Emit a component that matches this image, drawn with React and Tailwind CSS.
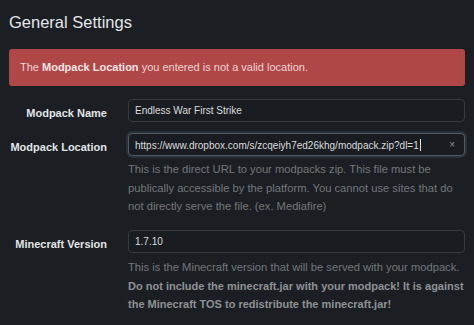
import clsx from 'clsx';

const FONT = "font-['Liberation_Sans',Arial,sans-serif]";

export default function App() {
	return (
		<div className={clsx('min-h-screen bg-[#1b1e22] px-[9px] pt-[10px]', FONT)}>
			<h2 className="text-[16.5px] leading-[24px] text-[#e4e7ea]">General Settings</h2>

			<div className="mt-[15px] rounded-[3px] bg-[#b04747] px-[11px] py-[11px] text-[11px] leading-[15px] text-[#efd3d3]">
				The <b className="text-[#f6e4e4]">Modpack Location</b> you entered is not a valid location.
			</div>

			<div className="mt-[13px]">
				<Row label="Modpack Name">
					<Field value="Endless War First Strike" />
				</Row>

				<Row label="Modpack Location" className="mt-[11px]">
					<Field value="https://www.dropbox.com/s/zcqeiyh7ed26khg/modpack.zip?dl=1" focused />
				</Row>
				<Help className="mt-[4px]">
					This is the direct URL to your modpacks zip. This file must be publically
					accessible by the platform. You cannot use sites that do not directly serve
					the file. (ex. Mediafire)
				</Help>

				<Row label="Minecraft Version" className="mt-[14.5px]">
					<Field value="1.7.10" />
				</Row>
				<Help className="mt-[5px]">
					This is the Minecraft version that will be served with your modpack.{' '}
					<b className="text-[11px] text-[#8e9296]">
						Do not include the minecraft.jar with your modpack! It is against the
						Minecraft TOS to redistribute the minecraft.jar!
					</b>
				</Help>
			</div>
		</div>
	);
}

const Row = ({ label, className = '', children }) => {
	return (
		<div className={clsx('flex items-center', className)}>
			<label className="w-[98px] shrink-0 translate-y-[3px] text-right text-[11px] font-bold text-[#e2e5e8]">
				{label}
			</label>
			<div className="ml-[21px] flex-1">{children}</div>
		</div>
	);
};

const Field = ({ value, focused = false }) => {
	return (
		<div
			className={clsx(
				'flex h-[23px] items-center rounded-[4px] border bg-[#191c20] pl-[6px] pr-[9px] text-[10px] text-[#d9dcdf]',
				focused
					? 'border-[#525b64] shadow-[0_0_0_2px_rgba(70,80,92,0.35)]'
					: 'border-[#363b41]'
			)}
		>
			<span className="flex-1 whitespace-nowrap">
				{value}
				{focused && <span className="ml-[1px] inline-block h-[12px] w-px translate-y-[2px] bg-[#e6e6e6]" />}
			</span>
			{focused && <span className="text-[10px] text-[#8a8f94]">×</span>}
		</div>
	);
};

const Help = ({ className = '', children }) => {
	return (
		<p className={clsx('ml-[119px] text-[11.2px] leading-[18.5px] text-[#74787c]', className)}>
			{children}
		</p>
	);
};
